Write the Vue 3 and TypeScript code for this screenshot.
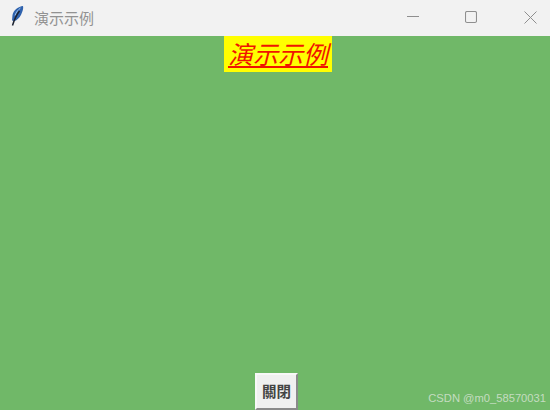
<script setup lang="ts">
const title = '演示示例'
</script>

<template>
  <div class="window">
    <header class="titlebar">
      <svg class="feather" width="14" height="22" viewBox="0 0 14 22">
        <path d="M13 1 C8.500 1.500 3.500 5 2.500 10 L2 15.500 C3.500 16 5 16 6 15.500 C9 13.500 11 10.500 12 7.500 C13 5 13.500 3 13 1 Z" fill="#2f62ad" />
        <path d="M10.500 3 C8.500 4.500 6 7 5 10.500" stroke="#9cc0ea" stroke-width="1" fill="none" />
        <path d="M9.500 6 C7 9 4.500 14 2.500 20.500" stroke="#1c2230" stroke-width="1.500" fill="none" />
      </svg>
      <span class="title">{{ title }}</span>
      <div class="controls">
        <svg class="ctl" width="12" height="14" viewBox="0 0 12 14"><path d="M0 5.500 H12" stroke="#8f8f8f" /></svg>
        <svg class="ctl" width="12" height="14" viewBox="0 0 12 14"><rect x="0.500" y="0.500" width="11" height="11" rx="1.500" fill="none" stroke="#8f8f8f" stroke-width="1.100" /></svg>
        <svg class="ctl close" width="13" height="14" viewBox="0 0 13 14"><path d="M0.500 0.500 L12.500 12.500 M12.500 0.500 L0.500 12.500" stroke="#8f8f8f" /></svg>
      </div>
    </header>
    <main class="body">
      <h1 class="banner">{{ title }}</h1>
      <button class="close-btn" type="button">關閉</button>
      <span class="watermark">CSDN @m0_58570031</span>
    </main>
  </div>
</template>

<style>
html, body { margin: 0; padding: 0; }
</style>

<style scoped>
.window {
  width: 550px;
  height: 410px;
  display: flex;
  flex-direction: column;
  overflow: hidden;
  font-family: "Noto Sans CJK TC", "Noto Sans CJK SC", sans-serif;
}
.titlebar {
  height: 36px;
  flex: none;
  background: #f2f2f2;
  display: flex;
  align-items: center;
  padding-left: 10px;
  box-sizing: border-box;
}
.feather { flex: none; margin-top: -4px; }
.title {
  margin-left: 10px;
  font-size: 15px;
  font-weight: 400;
  color: #929292;
  line-height: 20px;
  font-family: "Noto Sans CJK SC", sans-serif;
}
.controls {
  margin-left: auto;
  display: flex;
  align-items: center;
  gap: 46px;
  padding-right: 13px;
}
.close { margin-left: 1px; }
.body {
  flex: 1;
  background: #70b868;
  display: flex;
  flex-direction: column;
  align-items: flex-start;
  justify-content: space-between;
  position: relative;
}
.banner {
  margin: 0 0 0 224px;
  width: 108px;
  height: 36px;
  background: #ffff00;
  color: #f01400;
  font-size: 25px;
  font-weight: 400;
  font-style: italic;
  line-height: 34px;
  text-align: center;
  text-decoration: underline;
  font-family: "Noto Sans CJK SC", sans-serif;
  white-space: nowrap;
}
.close-btn {
  margin-left: 255px;
  width: 43px;
  height: 37px;
  padding: 0 0 2px;
  background: #f0f0f0;
  border: 2px solid;
  border-color: #f8f8f8 #8a8a8a #8a8a8a #f8f8f8;
  color: #444;
  font-size: 14.500px;
  font-weight: 700;
  font-family: "Noto Sans CJK TC", sans-serif;
  box-sizing: border-box;
}
.watermark {
  position: absolute;
  right: 4px;
  bottom: 5px;
  font-family: "Liberation Sans", sans-serif;
  font-size: 11.200px;
  line-height: 14px;
  color: #c4dcc0;
  white-space: nowrap;
}
</style>
